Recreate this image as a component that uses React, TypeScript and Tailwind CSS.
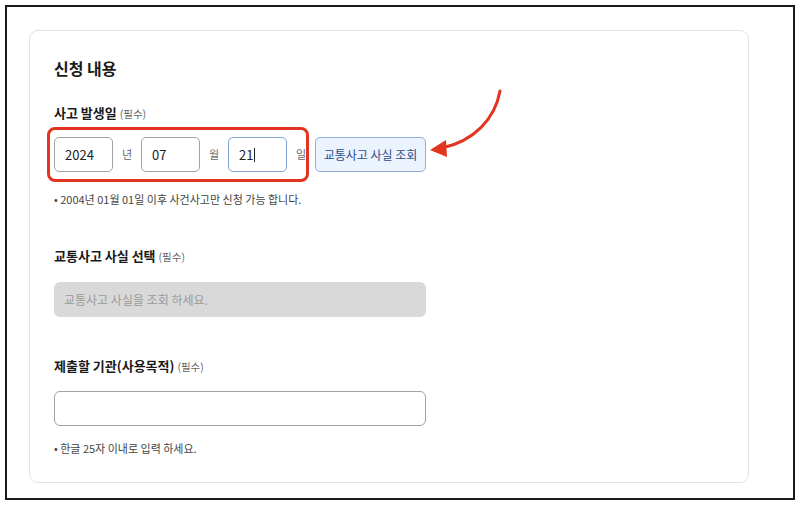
import React from 'react';

const FONT = { fontFamily: '"Noto Sans CJK KR", "Noto Sans", sans-serif' };

const Label: React.FC<{ text: string }> = ({ text }) => (
  <div className="text-[13px] leading-[18px] font-bold text-[#1a1a1a]">
    {text} <span className="text-[10.5px] leading-none font-normal text-[#666]">(필수)</span>
  </div>
);

const DateBox: React.FC<{ value: string; active?: boolean }> = ({ value, active }) => (
  <div
    className={`w-[59px] h-[35px] rounded-[5px] border flex items-center pl-[10px] text-[13px] text-[#222] bg-white ${
      active ? 'border-[#7fa1d4]' : 'border-[#a3a3a3]'
    }`}
  >
    {value}
    {active && <span className="inline-block w-px h-[14px] bg-[#222] ml-px" />}
  </div>
);

const Unit: React.FC<{ text: string }> = ({ text }) => (
  <span className="w-[28px] text-center text-[11px] text-[#666]">{text}</span>
);

export default function App() {
  return (
    <div className="w-[800px] h-[505px] bg-white pt-[5px] pl-[5px]" style={FONT}>
      <div className="w-[790px] h-[495px] border-2 border-[#1a1a1a] pl-[22px] pt-[23px]">
        <div className="w-[720px] h-[453px] border border-[#e3e3e3] rounded-[9px] pl-[24px] pt-[27px]">
          {/* 신청 내용 */}
          <h2 className="text-[16px] leading-[20px] font-bold text-[#1a1a1a]">신청 내용</h2>

          <div className="mt-[26px]">
            <Label text="사고 발생일" />
          </div>

          <div className="relative mt-[15px] flex items-center">
            <DateBox value="2024" />
            <Unit text="년" />
            <DateBox value="07" />
            <Unit text="월" />
            <DateBox value="21" active />
            <Unit text="일" />
            <button className="w-[111px] h-[35px] rounded-[5px] border border-[#8eaee0] bg-[#ebf3fe] text-[12px] text-[#2b4d8c]">
              교통사고 사실 조회
            </button>

            {/* 강조 표시 */}
            <div className="absolute left-[-7px] top-[-10px] w-[262px] h-[55px] border-[3px] border-[#e2341f] rounded-[8px] pointer-events-none" />
            <svg
              className="absolute left-[372px] top-[-48px] pointer-events-none"
              width="80"
              height="75"
              viewBox="372 -48 80 75"
            >
              <path d="M446 -46 C 441 -18, 420 4, 388 11" fill="none" stroke="#e2341f" strokeWidth="3" strokeLinecap="round" />
              <path d="M376 13 L 392 3 L 393 20 Z" fill="#e2341f" />
            </svg>
          </div>

          <p className="mt-[19px] text-[11px] leading-[16px] text-[#444]">• 2004년 01월 01일 이후 사건사고만 신청 가능 합니다.</p>

          {/* 교통사고 사실 선택 */}
          <div className="mt-[40px]">
            <Label text="교통사고 사실 선택" />
          </div>
          <div className="mt-[17px] w-[372px] h-[35px] rounded-[6px] bg-[#d9d9d9] flex items-center pl-[10px] text-[12px] text-[#9a9a9a]">
            교통사고 사실을 조회 하세요.
          </div>

          {/* 제출할 기관 */}
          <div className="mt-[40px]">
            <Label text="제출할 기관(사용목적)" />
          </div>
          <div className="mt-[16px] w-[372px] h-[35px] rounded-[6px] border border-[#a3a3a3] bg-white" />
          <p className="mt-[14px] text-[11px] leading-[16px] text-[#444]">• 한글 25자 이내로 입력 하세요.</p>
        </div>
      </div>
    </div>
  );
}
